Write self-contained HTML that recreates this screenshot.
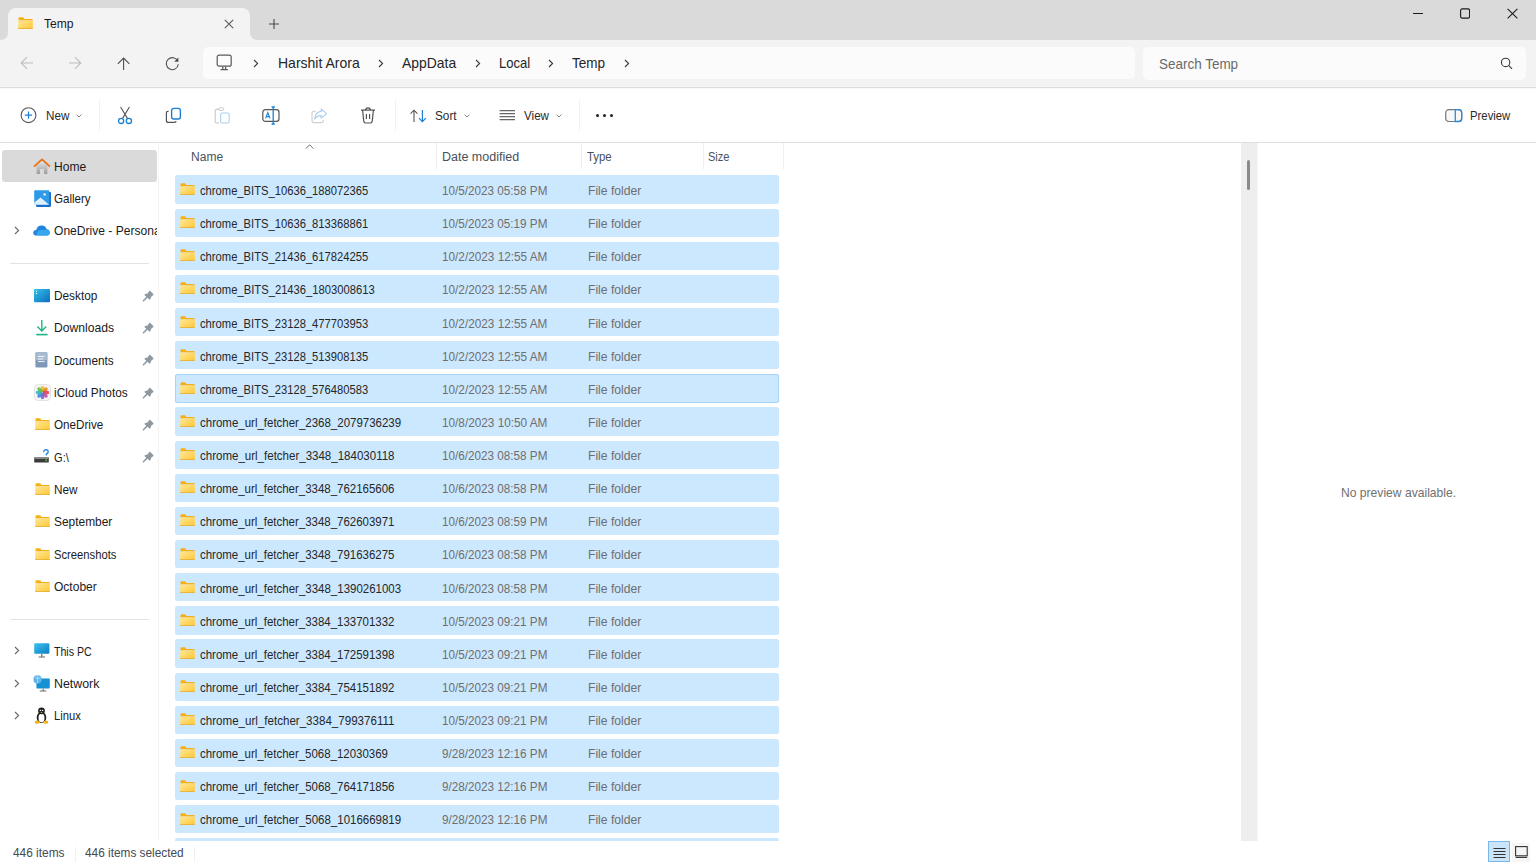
<!DOCTYPE html>
<html><head><meta charset="utf-8"><title>Temp - File Explorer</title>
<style>
html,body{margin:0;padding:0;}
body{width:1536px;height:862px;overflow:hidden;position:relative;background:#fff;font-family:"Liberation Sans",sans-serif;}
.b{position:absolute;}
.t{position:absolute;white-space:nowrap;transform-origin:0 0;}
</style></head><body>
<svg width="0" height="0" style="position:absolute"><defs><linearGradient id="fg" x1="0" y1="0" x2="1" y2="1"><stop offset="0" stop-color="#ffe799"/><stop offset="1" stop-color="#ffc832"/></linearGradient></defs></svg>
<div class="b" style="left:0px;top:0px;width:1536px;height:40px;background:#dadada;"></div><div class="b" style="left:8px;top:8px;width:242px;height:32px;background:#f3f3f3;border-radius:8px 8px 0 0;"></div><svg class="b" style="left:0px;top:32px" width="8" height="8" viewBox="0 0 8 8"><path d="M0 8 L8 8 L8 0 Q8 8 0 8Z" fill="#f3f3f3"/></svg><svg class="b" style="left:250px;top:32px" width="8" height="8" viewBox="0 0 8 8"><path d="M0 0 L0 8 L8 8 Q0 8 0 0Z" fill="#f3f3f3"/></svg><svg class="b" style="left:17.5px;top:17.3px" width="15" height="12" viewBox="0 0 15 12"><path d="M0.5 1.2 Q0.5 0.2 1.5 0.2 H5.2 L6.4 1.9 H13.6 Q14.8 1.9 14.8 3.1 V3.6 H0.5Z" fill="#f5b016"/><rect x="0.2" y="3.4" width="14.6" height="8.4" rx="0.9" fill="url(#fg)"/><rect x="0.2" y="11.0" width="14.6" height="0.8" fill="#e6ad2e"/></svg><div class="t" style="left:43.5px;top:16px;font-size:13px;line-height:15px;color:#1a1a1a;transform:scaleX(0.9309);">Temp</div><svg class="b" style="left:224px;top:19px" width="10" height="10" viewBox="0 0 10 10"><path d="M0.8 0.8 L9.2 9.2 M9.2 0.8 L0.8 9.2" stroke="#5a5a5a" stroke-width="1.1" fill="none"/></svg><svg class="b" style="left:269px;top:19px" width="10" height="10" viewBox="0 0 10 10"><path d="M5 0 V10 M0 5 H10" stroke="#4a4a4a" stroke-width="1.1" fill="none"/></svg><div class="b" style="left:1413px;top:13px;width:10px;height:1px;background:#1a1a1a;"></div><svg class="b" style="left:1460px;top:8px" width="10" height="11" viewBox="0 0 10 11"><rect x="0.6" y="0.9" width="9" height="9.2" rx="1.6" stroke="#1a1a1a" stroke-width="1.1" fill="none"/></svg><svg class="b" style="left:1507px;top:8px" width="11" height="11" viewBox="0 0 11 11"><path d="M0.6 0.9 L10.4 10.3 M10.4 0.9 L0.6 10.3" stroke="#1a1a1a" stroke-width="1.1" fill="none"/></svg><div class="b" style="left:0px;top:40px;width:1536px;height:47px;background:#f3f3f3;"></div><div class="b" style="left:0px;top:87px;width:1536px;height:1px;background:#dcdcdc;"></div><svg class="b" style="left:20px;top:56px" width="14" height="14" viewBox="0 0 14 14"><path d="M13 7 H1.5 M7 1.2 L1.2 7 L7 12.8" stroke="#bdbdbd" stroke-width="1.1" fill="none"/></svg><svg class="b" style="left:68px;top:56px" width="14" height="14" viewBox="0 0 14 14"><path d="M1 7 H12.5 M7 1.2 L12.8 7 L7 12.8" stroke="#bdbdbd" stroke-width="1.1" fill="none"/></svg><svg class="b" style="left:117px;top:57px" width="14" height="14" viewBox="0 0 14 14"><path d="M6.6 13 V1.2 M0.8 6.8 L6.6 1 L12.4 6.8" stroke="#4f4f4f" stroke-width="1.1" fill="none"/></svg><svg class="b" style="left:165px;top:56px" width="15" height="15" viewBox="0 0 15 15"><path d="M12.8 5.2 A6 6 0 1 0 13.3 8.2" stroke="#4f4f4f" stroke-width="1.1" fill="none"/><path d="M13.4 1.6 V5.8 H9.2Z" fill="#4f4f4f"/></svg><div class="b" style="left:203px;top:47px;width:932px;height:32px;background:#fbfbfb;border-radius:5px;"></div><svg class="b" style="left:216px;top:54px" width="17" height="17" viewBox="0 0 17 17"><rect x="1.2" y="1.2" width="14" height="11" rx="2" stroke="#5a5a5a" stroke-width="1.2" fill="none"/><path d="M4.5 15.6 H11.9 M6.8 12.4 V15.4 M9.6 12.4 V15.4" stroke="#5a5a5a" stroke-width="1.2"/></svg><svg class="b" style="left:253px;top:59px" width="6" height="9" viewBox="0 0 6 9"><path d="M1 1 L4.6 4.5 L1 8" stroke="#3a3a3a" stroke-width="1.1" fill="none"/></svg><svg class="b" style="left:378px;top:59px" width="6" height="9" viewBox="0 0 6 9"><path d="M1 1 L4.6 4.5 L1 8" stroke="#3a3a3a" stroke-width="1.1" fill="none"/></svg><svg class="b" style="left:474.5px;top:59px" width="6" height="9" viewBox="0 0 6 9"><path d="M1 1 L4.6 4.5 L1 8" stroke="#3a3a3a" stroke-width="1.1" fill="none"/></svg><svg class="b" style="left:548px;top:59px" width="6" height="9" viewBox="0 0 6 9"><path d="M1 1 L4.6 4.5 L1 8" stroke="#3a3a3a" stroke-width="1.1" fill="none"/></svg><svg class="b" style="left:623.5px;top:59px" width="6" height="9" viewBox="0 0 6 9"><path d="M1 1 L4.6 4.5 L1 8" stroke="#3a3a3a" stroke-width="1.1" fill="none"/></svg><div class="t" style="left:277.8px;top:55px;font-size:14.5px;line-height:16px;color:#262626;transform:scaleX(0.9654);">Harshit Arora</div><div class="t" style="left:402.1px;top:55px;font-size:14.5px;line-height:16px;color:#262626;transform:scaleX(0.9604);">AppData</div><div class="t" style="left:498.5px;top:55px;font-size:14.5px;line-height:16px;color:#262626;transform:scaleX(0.8999);">Local</div><div class="t" style="left:572.2px;top:55px;font-size:14.5px;line-height:16px;color:#262626;transform:scaleX(0.9332);">Temp</div><div class="b" style="left:1143px;top:47px;width:383px;height:33px;background:#fbfbfb;border-radius:5px;"></div><div class="t" style="left:1158.5px;top:55px;font-size:15px;line-height:17px;color:#6a6a6a;transform:scaleX(0.8977);">Search Temp</div><svg class="b" style="left:1500px;top:57px" width="13" height="13" viewBox="0 0 13 13"><circle cx="5.6" cy="5.4" r="4.2" stroke="#3a3a3a" stroke-width="1.1" fill="none"/><path d="M8.6 8.4 L12 11.8" stroke="#3a3a3a" stroke-width="1.2"/></svg><div class="b" style="left:0px;top:88px;width:1536px;height:54px;background:#ffffff;"></div><div class="b" style="left:0px;top:142px;width:1536px;height:1px;background:#e0e0e0;"></div><div class="b" style="left:0px;top:88px;width:1536px;height:1px;background:#f8f8f8;"></div><svg class="b" style="left:20px;top:107px" width="17" height="17" viewBox="0 0 17 17"><circle cx="8.5" cy="8.2" r="7.4" stroke="#555" stroke-width="1.1" fill="none"/><path d="M8.5 4.6 V11.8 M4.9 8.2 H12.1" stroke="#1a7fd4" stroke-width="1.2"/></svg><div class="t" style="left:45.6px;top:108px;font-size:13px;line-height:15px;color:#2b2b2b;transform:scaleX(0.8995);">New</div><svg class="b" style="left:76px;top:114px" width="6" height="4" viewBox="0 0 6 4"><path d="M0.6 0.6 L3 3 L5.4 0.6" stroke="#777" stroke-width="0.9" fill="none"/></svg><div class="b" style="left:99px;top:100px;width:1px;height:31px;background:#f0f0f0;"></div><svg class="b" style="left:117px;top:106px" width="16" height="19" viewBox="0 0 16 19"><path d="M3.6 1 L10.6 12.6 M12.4 1 L5.4 12.6" stroke="#555" stroke-width="1.1" fill="none"/><circle cx="4.1" cy="14.9" r="2.6" stroke="#1a7fd4" stroke-width="1.3" fill="none"/><circle cx="11.9" cy="14.9" r="2.6" stroke="#1a7fd4" stroke-width="1.3" fill="none"/></svg><svg class="b" style="left:165px;top:107px" width="17" height="17" viewBox="0 0 17 17"><path d="M3.6 4.4 H2.8 Q1.4 4.4 1.4 5.8 V13.4 Q1.4 15.4 3.4 15.4 H9.6 Q11 15.4 11 14" stroke="#555" stroke-width="1.2" fill="none"/><rect x="6.6" y="1.4" width="8.8" height="10.6" rx="2.2" stroke="#1a7fd4" stroke-width="1.4" fill="none"/></svg><svg class="b" style="left:214px;top:107px" width="17" height="17" viewBox="0 0 17 17"><path d="M5 2.4 H2.6 Q1.2 2.4 1.2 3.8 V14.6 Q1.2 16 2.6 16 H5" stroke="#c8c8c8" stroke-width="1.1" fill="none"/><rect x="4.8" y="0.8" width="5" height="2.6" rx="1.2" stroke="#c8c8c8" stroke-width="1" fill="none"/><rect x="6.6" y="6" width="8.6" height="10" rx="1.8" stroke="#a9cff0" stroke-width="1.1" fill="none"/></svg><svg class="b" style="left:262px;top:106px" width="18" height="19" viewBox="0 0 18 19"><rect x="0.8" y="3.6" width="16.2" height="11.8" rx="2.6" stroke="#555" stroke-width="1.2" fill="none"/><path d="M3.6 12.4 L5.8 6.6 L8 12.4 M4.4 10.6 H7.2" stroke="#1a7fd4" stroke-width="1.1" fill="none"/><path d="M11.2 1 V18 M9.6 1 H12.8 M9.6 18 H12.8" stroke="#1a7fd4" stroke-width="1.3"/></svg><svg class="b" style="left:311px;top:108px" width="17" height="16" viewBox="0 0 17 16"><path d="M5 3.2 H3 Q1 3.2 1 5.2 V12.6 Q1 14.6 3 14.6 H10.4 Q12.4 14.6 12.4 12.6 V12" stroke="#cfcfcf" stroke-width="1.1" fill="none"/><path d="M10.2 1 L15.6 5.6 L10.2 10.2 V7.6 Q6 7.4 3.6 11 Q4.4 3.8 10.2 3.4Z" stroke="#a9cff0" stroke-width="1.1" fill="none" stroke-linejoin="round"/></svg><svg class="b" style="left:360px;top:107px" width="16" height="17" viewBox="0 0 16 17"><path d="M1 3.2 H15 M5.6 3 Q5.6 0.9 8 0.9 Q10.4 0.9 10.4 3 M2.6 3.4 L3.8 14.4 Q4 16 5.6 16 H10.4 Q12 16 12.2 14.4 L13.4 3.4 M6.4 7 V12 M9.6 7 V12" stroke="#555" stroke-width="1.2" fill="none"/></svg><div class="b" style="left:394.8px;top:100px;width:1px;height:31px;background:#f0f0f0;"></div><svg class="b" style="left:410px;top:109px" width="17" height="14" viewBox="0 0 17 14"><path d="M4 13 V1.2 M0.6 4.6 L4 1.2 L7.4 4.6" stroke="#555" stroke-width="1.1" fill="none"/><path d="M12.4 1 V12.6 M9 9.2 L12.4 12.6 L15.8 9.2" stroke="#1a7fd4" stroke-width="1.2" fill="none"/></svg><div class="t" style="left:435px;top:108px;font-size:13px;line-height:15px;color:#2b2b2b;transform:scaleX(0.9059);">Sort</div><svg class="b" style="left:464px;top:114px" width="6" height="4" viewBox="0 0 6 4"><path d="M0.6 0.6 L3 3 L5.4 0.6" stroke="#777" stroke-width="0.9" fill="none"/></svg><svg class="b" style="left:499px;top:109px" width="17" height="13" viewBox="0 0 17 13"><path d="M0.6 1.6 H16 M0.6 4.6 H16 M0.6 7.6 H16 M0.6 10.6 H16" stroke="#666" stroke-width="1.1"/></svg><div class="t" style="left:524px;top:108px;font-size:13px;line-height:15px;color:#2b2b2b;transform:scaleX(0.8944);">View</div><svg class="b" style="left:556px;top:114px" width="6" height="4" viewBox="0 0 6 4"><path d="M0.6 0.6 L3 3 L5.4 0.6" stroke="#777" stroke-width="0.9" fill="none"/></svg><div class="b" style="left:579.3px;top:100px;width:1px;height:31px;background:#f0f0f0;"></div><div class="b" style="left:596.3px;top:114.2px;width:3px;height:3px;background:#1f1f1f;border-radius:50%;"></div><div class="b" style="left:603.3px;top:114.2px;width:3px;height:3px;background:#1f1f1f;border-radius:50%;"></div><div class="b" style="left:610.3px;top:114.2px;width:3px;height:3px;background:#1f1f1f;border-radius:50%;"></div><svg class="b" style="left:1445px;top:109px" width="18" height="14" viewBox="0 0 18 14"><rect x="0.7" y="0.7" width="16" height="11.8" rx="3" stroke="#777" stroke-width="1.2" fill="#f8f8f8"/><path d="M10.3 0.7 H13.7 Q16.7 0.7 16.7 3.7 V9.5 Q16.7 12.5 13.7 12.5 H10.3Z" stroke="#2b8ae0" stroke-width="1.3" fill="none"/></svg><div class="t" style="left:1470.4px;top:109px;font-size:12.7px;line-height:14px;color:#2b2b2b;transform:scaleX(0.8931);">Preview</div><div class="b" style="left:0px;top:143px;width:158px;height:698px;background:#ffffff;"></div><div class="b" style="left:158px;top:143px;width:1.5px;height:698px;background:#f4f4f4;"></div><div class="b" style="left:2px;top:149.6px;width:155px;height:32.2px;background:#dadada;border-radius:3px;"></div><div class="b" style="left:10px;top:263px;width:139px;height:1px;background:#e3e3e3;"></div><div class="b" style="left:10px;top:618.5px;width:139px;height:1px;background:#e3e3e3;"></div><div class="b" style="left:0;top:0;width:157px;height:841px;overflow:hidden"><div class="t" style="left:53.9px;top:159px;font-size:13px;line-height:15px;color:#1b1b1b;transform:scaleX(0.9283);">Home</div><svg class="b" style="left:33px;top:157.7px" width="18" height="17" viewBox="0 0 18 17"><defs><linearGradient id="hg" x1="0" y1="0" x2="0" y2="1"><stop offset="0" stop-color="#e6e6e6"/><stop offset="1" stop-color="#9c9c9c"/></linearGradient></defs><path d="M3.6 7.6 L9 2.8 L14.4 7.6 V16 H11 V11 H7 V16 H3.6Z" fill="url(#hg)"/><path d="M1 8.6 L9 1.4 L17 8.6" stroke="#e8701a" stroke-width="1.8" fill="none" stroke-linejoin="round"/></svg><div class="t" style="left:53.9px;top:191px;font-size:13px;line-height:15px;color:#1b1b1b;transform:scaleX(0.8886);">Gallery</div><svg class="b" style="left:34px;top:189.7px" width="17" height="17" viewBox="0 0 17 17"><rect x="2" y="2" width="15" height="15" rx="1" fill="#1d6fc9"/><rect x="0.2" y="0.2" width="15" height="14.6" rx="1" fill="#2f9ae8"/><path d="M0.2 12.6 L6.6 7.4 L14.2 14 L15.2 14.8 H0.2Z" fill="#dff0fd"/><circle cx="10.6" cy="4.4" r="1.2" fill="#fff"/></svg><div class="t" style="left:53.9px;top:223px;font-size:13px;line-height:15px;color:#1b1b1b;transform:scaleX(0.928);">OneDrive - Personal</div><svg class="b" style="left:33px;top:224.7px" width="17" height="11" viewBox="0 0 17 11"><path d="M3.6 10.6 Q0.2 10.6 0.2 7.8 Q0.2 5.2 3.2 5 Q4.4 0.4 9 0.6 Q12.6 0.8 13.6 4.2 Q16.8 4.4 16.8 7.6 Q16.8 10.6 13.8 10.6Z" fill="#1f85dd"/><path d="M5 10.6 Q3 10 4.4 6.8 Q6.6 4 10.4 5 Q13.4 3.6 16 5.4 Q16.8 6.4 16.8 7.6 Q16.8 10.6 13.8 10.6Z" fill="#36a6ee"/></svg><svg class="b" style="left:14px;top:225.89999999999998px" width="6" height="9" viewBox="0 0 6 9"><path d="M1 1 L4.6 4.5 L1 8" stroke="#666" stroke-width="1.1" fill="none"/></svg><div class="t" style="left:53.9px;top:288px;font-size:13px;line-height:15px;color:#1b1b1b;transform:scaleX(0.9098);">Desktop</div><svg class="b" style="left:34px;top:288.59999999999997px" width="16" height="14" viewBox="0 0 16 14"><defs><linearGradient id="dg" x1="0" y1="0" x2="1" y2="1"><stop offset="0" stop-color="#30c3e8"/><stop offset="1" stop-color="#0f6bc0"/></linearGradient></defs><rect x="0" y="0" width="16" height="13.2" rx="1" fill="url(#dg)"/><rect x="2" y="1.6" width="1.1" height="1.1" fill="#fff"/><rect x="2" y="3.9" width="1.1" height="1.1" fill="#fff"/></svg><svg class="b" style="left:142px;top:289.59999999999997px" width="12" height="12" viewBox="0 0 12 12"><path d="M1.4 10.8 L4.8 7.4" stroke="#8e99a2" stroke-width="1.5" stroke-linecap="round"/><path d="M7.3 0.7 Q7.8 0.5 8.3 1 L11.3 4 Q11.8 4.5 11.4 5 L9.4 6.4 L8.6 8.6 Q8.4 9.6 7.6 9.8 L2.4 5 Q2.6 4.2 3.6 4 L5.8 3.2 Z" fill="#8e99a2"/></svg><div class="t" style="left:53.9px;top:320px;font-size:13px;line-height:15px;color:#1b1b1b;transform:scaleX(0.9343);">Downloads</div><svg class="b" style="left:35px;top:319.42999999999995px" width="14" height="17" viewBox="0 0 14 17"><path d="M6.8 1 V12 M2.4 7.6 L6.8 12 L11.2 7.6" stroke="#1fb38a" stroke-width="1.4" fill="none"/><path d="M1.2 15.6 H12.6" stroke="#1fb38a" stroke-width="1.6"/></svg><svg class="b" style="left:142px;top:321.92999999999995px" width="12" height="12" viewBox="0 0 12 12"><path d="M1.4 10.8 L4.8 7.4" stroke="#8e99a2" stroke-width="1.5" stroke-linecap="round"/><path d="M7.3 0.7 Q7.8 0.5 8.3 1 L11.3 4 Q11.8 4.5 11.4 5 L9.4 6.4 L8.6 8.6 Q8.4 9.6 7.6 9.8 L2.4 5 Q2.6 4.2 3.6 4 L5.8 3.2 Z" fill="#8e99a2"/></svg><div class="t" style="left:53.9px;top:353px;font-size:13px;line-height:15px;color:#1b1b1b;transform:scaleX(0.9080);">Documents</div><svg class="b" style="left:35px;top:351.9599999999999px" width="13" height="16" viewBox="0 0 13 16"><rect x="0.4" y="0.2" width="12" height="15.4" rx="1.4" fill="#7d98b8"/><rect x="0.4" y="0.2" width="12" height="8" rx="1.4" fill="#a6bad0"/><path d="M3 4.4 H9.6 M3 7 H8 M3 9.6 H9.6" stroke="#f1f5f9" stroke-width="1"/></svg><svg class="b" style="left:142px;top:354.25999999999993px" width="12" height="12" viewBox="0 0 12 12"><path d="M1.4 10.8 L4.8 7.4" stroke="#8e99a2" stroke-width="1.5" stroke-linecap="round"/><path d="M7.3 0.7 Q7.8 0.5 8.3 1 L11.3 4 Q11.8 4.5 11.4 5 L9.4 6.4 L8.6 8.6 Q8.4 9.6 7.6 9.8 L2.4 5 Q2.6 4.2 3.6 4 L5.8 3.2 Z" fill="#8e99a2"/></svg><div class="t" style="left:53.9px;top:385px;font-size:13px;line-height:15px;color:#1b1b1b;transform:scaleX(0.9104);">iCloud Photos</div><svg class="b" style="left:34px;top:383.59px" width="17" height="17" viewBox="0 0 17 17"><rect x="0.5" y="0.5" width="16" height="16" rx="3.6" fill="#f6f6f6" stroke="#ddd" stroke-width="0.8"/><ellipse cx="8.5" cy="5" rx="1.9" ry="3.2" fill="#f4c12a" opacity="0.9" transform="rotate(0 8.5 8.5)"/><ellipse cx="8.5" cy="5" rx="1.9" ry="3.2" fill="#ef8a1d" opacity="0.9" transform="rotate(45 8.5 8.5)"/><ellipse cx="8.5" cy="5" rx="1.9" ry="3.2" fill="#e5434f" opacity="0.9" transform="rotate(90 8.5 8.5)"/><ellipse cx="8.5" cy="5" rx="1.9" ry="3.2" fill="#c84d9e" opacity="0.9" transform="rotate(135 8.5 8.5)"/><ellipse cx="8.5" cy="5" rx="1.9" ry="3.2" fill="#8460c9" opacity="0.9" transform="rotate(180 8.5 8.5)"/><ellipse cx="8.5" cy="5" rx="1.9" ry="3.2" fill="#3f86e0" opacity="0.9" transform="rotate(225 8.5 8.5)"/><ellipse cx="8.5" cy="5" rx="1.9" ry="3.2" fill="#37b4c8" opacity="0.9" transform="rotate(270 8.5 8.5)"/><ellipse cx="8.5" cy="5" rx="1.9" ry="3.2" fill="#62bd4a" opacity="0.9" transform="rotate(315 8.5 8.5)"/></svg><svg class="b" style="left:142px;top:386.59px" width="12" height="12" viewBox="0 0 12 12"><path d="M1.4 10.8 L4.8 7.4" stroke="#8e99a2" stroke-width="1.5" stroke-linecap="round"/><path d="M7.3 0.7 Q7.8 0.5 8.3 1 L11.3 4 Q11.8 4.5 11.4 5 L9.4 6.4 L8.6 8.6 Q8.4 9.6 7.6 9.8 L2.4 5 Q2.6 4.2 3.6 4 L5.8 3.2 Z" fill="#8e99a2"/></svg><div class="t" style="left:53.9px;top:417px;font-size:13px;line-height:15px;color:#1b1b1b;transform:scaleX(0.8976);">OneDrive</div><svg class="b" style="left:34.5px;top:418.41999999999996px" width="15" height="12" viewBox="0 0 15 12"><path d="M0.5 1.2 Q0.5 0.2 1.5 0.2 H5.2 L6.4 1.9 H13.6 Q14.8 1.9 14.8 3.1 V3.6 H0.5Z" fill="#f5b016"/><rect x="0.2" y="3.4" width="14.6" height="8.4" rx="0.9" fill="url(#fg)"/><rect x="0.2" y="11.0" width="14.6" height="0.8" fill="#e6ad2e"/></svg><svg class="b" style="left:142px;top:418.91999999999996px" width="12" height="12" viewBox="0 0 12 12"><path d="M1.4 10.8 L4.8 7.4" stroke="#8e99a2" stroke-width="1.5" stroke-linecap="round"/><path d="M7.3 0.7 Q7.8 0.5 8.3 1 L11.3 4 Q11.8 4.5 11.4 5 L9.4 6.4 L8.6 8.6 Q8.4 9.6 7.6 9.8 L2.4 5 Q2.6 4.2 3.6 4 L5.8 3.2 Z" fill="#8e99a2"/></svg><div class="t" style="left:53.9px;top:450px;font-size:13px;line-height:15px;color:#1b1b1b;transform:scaleX(0.8533);">G:\</div><svg class="b" style="left:34px;top:448.74999999999994px" width="15" height="16" viewBox="0 0 15 16"><rect x="0.2" y="8" width="14.6" height="5.6" rx="1.2" fill="#3b3b3b"/><rect x="0.2" y="8" width="14.6" height="2" rx="0.8" fill="#8a8a8a"/><circle cx="12.2" cy="11.4" r="0.8" fill="#59d05c"/><path d="M9.8 3.2 Q9.8 0.8 12 0.8 Q14.2 0.8 14.2 2.8 Q14.2 4.2 12.4 5 V6.4" stroke="#2b8ae0" stroke-width="1.4" fill="none"/></svg><svg class="b" style="left:142px;top:451.24999999999994px" width="12" height="12" viewBox="0 0 12 12"><path d="M1.4 10.8 L4.8 7.4" stroke="#8e99a2" stroke-width="1.5" stroke-linecap="round"/><path d="M7.3 0.7 Q7.8 0.5 8.3 1 L11.3 4 Q11.8 4.5 11.4 5 L9.4 6.4 L8.6 8.6 Q8.4 9.6 7.6 9.8 L2.4 5 Q2.6 4.2 3.6 4 L5.8 3.2 Z" fill="#8e99a2"/></svg><div class="t" style="left:53.9px;top:482px;font-size:13px;line-height:15px;color:#1b1b1b;transform:scaleX(0.9033);">New</div><svg class="b" style="left:34.5px;top:483.08px" width="15" height="12" viewBox="0 0 15 12"><path d="M0.5 1.2 Q0.5 0.2 1.5 0.2 H5.2 L6.4 1.9 H13.6 Q14.8 1.9 14.8 3.1 V3.6 H0.5Z" fill="#f5b016"/><rect x="0.2" y="3.4" width="14.6" height="8.4" rx="0.9" fill="url(#fg)"/><rect x="0.2" y="11.0" width="14.6" height="0.8" fill="#e6ad2e"/></svg><div class="t" style="left:53.9px;top:514px;font-size:13px;line-height:15px;color:#1b1b1b;transform:scaleX(0.9168);">September</div><svg class="b" style="left:34.5px;top:515.4100000000001px" width="15" height="12" viewBox="0 0 15 12"><path d="M0.5 1.2 Q0.5 0.2 1.5 0.2 H5.2 L6.4 1.9 H13.6 Q14.8 1.9 14.8 3.1 V3.6 H0.5Z" fill="#f5b016"/><rect x="0.2" y="3.4" width="14.6" height="8.4" rx="0.9" fill="url(#fg)"/><rect x="0.2" y="11.0" width="14.6" height="0.8" fill="#e6ad2e"/></svg><div class="t" style="left:53.9px;top:547px;font-size:13px;line-height:15px;color:#1b1b1b;transform:scaleX(0.8635);">Screenshots</div><svg class="b" style="left:34.5px;top:547.74px" width="15" height="12" viewBox="0 0 15 12"><path d="M0.5 1.2 Q0.5 0.2 1.5 0.2 H5.2 L6.4 1.9 H13.6 Q14.8 1.9 14.8 3.1 V3.6 H0.5Z" fill="#f5b016"/><rect x="0.2" y="3.4" width="14.6" height="8.4" rx="0.9" fill="url(#fg)"/><rect x="0.2" y="11.0" width="14.6" height="0.8" fill="#e6ad2e"/></svg><div class="t" style="left:53.9px;top:579px;font-size:13px;line-height:15px;color:#1b1b1b;transform:scaleX(0.9254);">October</div><svg class="b" style="left:34.5px;top:580.0699999999999px" width="15" height="12" viewBox="0 0 15 12"><path d="M0.5 1.2 Q0.5 0.2 1.5 0.2 H5.2 L6.4 1.9 H13.6 Q14.8 1.9 14.8 3.1 V3.6 H0.5Z" fill="#f5b016"/><rect x="0.2" y="3.4" width="14.6" height="8.4" rx="0.9" fill="url(#fg)"/><rect x="0.2" y="11.0" width="14.6" height="0.8" fill="#e6ad2e"/></svg><div class="t" style="left:53.9px;top:644px;font-size:13px;line-height:15px;color:#1b1b1b;transform:scaleX(0.8154);">This PC</div><svg class="b" style="left:34px;top:642.7px" width="16" height="15" viewBox="0 0 16 15"><defs><linearGradient id="pcg" x1="0" y1="0" x2="1" y2="1"><stop offset="0" stop-color="#36c5ef"/><stop offset="1" stop-color="#0f7cc4"/></linearGradient></defs><rect x="0.2" y="0.2" width="15.2" height="10.6" rx="1" fill="url(#pcg)"/><path d="M7.8 11 V13.6 M4.6 14 H11" stroke="#6b6b6b" stroke-width="1.2"/></svg><svg class="b" style="left:14px;top:646.4000000000001px" width="6" height="9" viewBox="0 0 6 9"><path d="M1 1 L4.6 4.5 L1 8" stroke="#666" stroke-width="1.1" fill="none"/></svg><div class="t" style="left:53.9px;top:676px;font-size:13px;line-height:15px;color:#1b1b1b;transform:scaleX(0.9520);">Network</div><svg class="b" style="left:33px;top:674.5300000000001px" width="18" height="17" viewBox="0 0 18 17"><rect x="3.4" y="3.6" width="13.4" height="9.8" rx="1" fill="#1592d4"/><path d="M10.2 13.8 V15.6 M6.8 16 H13.4" stroke="#6b6b6b" stroke-width="1.1"/><circle cx="4.6" cy="4.4" r="4.1" fill="#5fb3ea"/><path d="M2 2.6 Q4.6 4.4 7.6 2.6 M4.6 0.4 V8.4" stroke="#c9e8fb" stroke-width="0.7" fill="none"/></svg><svg class="b" style="left:14px;top:678.7300000000001px" width="6" height="9" viewBox="0 0 6 9"><path d="M1 1 L4.6 4.5 L1 8" stroke="#666" stroke-width="1.1" fill="none"/></svg><div class="t" style="left:53.9px;top:708px;font-size:13px;line-height:15px;color:#1b1b1b;transform:scaleX(0.8656);">Linux</div><svg class="b" style="left:34px;top:706.86px" width="15" height="17" viewBox="0 0 15 17"><ellipse cx="7.5" cy="10.4" rx="4.8" ry="5.6" fill="#222"/><ellipse cx="7.5" cy="11" rx="3" ry="4.2" fill="#fff"/><circle cx="7.5" cy="3.8" r="3.4" fill="#222"/><circle cx="6.4" cy="3.4" r="0.7" fill="#fff"/><circle cx="8.6" cy="3.4" r="0.7" fill="#fff"/><path d="M6.2 5 L7.5 6 L8.8 5Z" fill="#f0b31a"/><ellipse cx="3.2" cy="15.2" rx="2.6" ry="1.6" fill="#f0b31a"/><ellipse cx="11.8" cy="15.2" rx="2.6" ry="1.6" fill="#f0b31a"/></svg><svg class="b" style="left:14px;top:711.0600000000001px" width="6" height="9" viewBox="0 0 6 9"><path d="M1 1 L4.6 4.5 L1 8" stroke="#666" stroke-width="1.1" fill="none"/></svg></div><div class="b" style="left:159px;top:143px;width:1082px;height:698px;background:#ffffff;"></div><div class="t" style="left:190.8px;top:150px;font-size:12.5px;line-height:14px;color:#48505a;transform:scaleX(0.9627);">Name</div><svg class="b" style="left:305px;top:143.5px" width="10" height="6" viewBox="0 0 10 6"><path d="M0.8 4.6 L4.6 0.8 L8.4 4.6" stroke="#6a6a6a" stroke-width="1" fill="none"/></svg><div class="b" style="left:435.5px;top:143px;width:1px;height:26px;background:#efefef;"></div><div class="b" style="left:580.5px;top:143px;width:1px;height:26px;background:#efefef;"></div><div class="b" style="left:702.5px;top:143px;width:1px;height:26px;background:#efefef;"></div><div class="b" style="left:782.5px;top:143px;width:1px;height:26px;background:#efefef;"></div><div class="t" style="left:442px;top:150px;font-size:12.5px;line-height:14px;color:#48505a;transform:scaleX(0.9997);">Date modified</div><div class="t" style="left:587.2px;top:150px;font-size:12.5px;line-height:14px;color:#48505a;transform:scaleX(0.9111);">Type</div><div class="t" style="left:708.2px;top:150px;font-size:12.5px;line-height:14px;color:#48505a;transform:scaleX(0.8838);">Size</div><div class="b" style="left:159px;top:143px;width:1082px;height:698px;overflow:hidden"><div class="b" style="left:16.19999999999999px;top:32.4px;width:604.0px;height:28.3px;background:#cce8ff;border-radius:2.5px;"></div><svg class="b" style="left:21px;top:40.0px" width="15" height="12" viewBox="0 0 15 12"><path d="M0.5 1.2 Q0.5 0.2 1.5 0.2 H5.2 L6.4 1.9 H13.6 Q14.8 1.9 14.8 3.1 V3.6 H0.5Z" fill="#f5b016"/><rect x="0.2" y="3.4" width="14.6" height="8.4" rx="0.9" fill="url(#fg)"/><rect x="0.2" y="11.0" width="14.6" height="0.8" fill="#e6ad2e"/></svg><div class="t" style="left:40.69999999999999px;top:40px;font-size:12.8px;line-height:15px;color:#262626;transform:scaleX(0.8755);">chrome_BITS_10636_188072365</div><div class="t" style="left:283px;top:41px;font-size:12.3px;line-height:14px;color:#6e6e6e;transform:scaleX(0.9516);">10/5/2023 05:58 PM</div><div class="t" style="left:428.5px;top:41px;font-size:12.3px;line-height:14px;color:#6e6e6e;transform:scaleX(0.9870);">File folder</div><div class="b" style="left:16.19999999999999px;top:65.54px;width:604.0px;height:28.3px;background:#cce8ff;border-radius:2.5px;"></div><svg class="b" style="left:21px;top:73.14px" width="15" height="12" viewBox="0 0 15 12"><path d="M0.5 1.2 Q0.5 0.2 1.5 0.2 H5.2 L6.4 1.9 H13.6 Q14.8 1.9 14.8 3.1 V3.6 H0.5Z" fill="#f5b016"/><rect x="0.2" y="3.4" width="14.6" height="8.4" rx="0.9" fill="url(#fg)"/><rect x="0.2" y="11.0" width="14.6" height="0.8" fill="#e6ad2e"/></svg><div class="t" style="left:40.69999999999999px;top:73px;font-size:12.8px;line-height:15px;color:#262626;transform:scaleX(0.8755);">chrome_BITS_10636_813368861</div><div class="t" style="left:283px;top:74px;font-size:12.3px;line-height:14px;color:#6e6e6e;transform:scaleX(0.9516);">10/5/2023 05:19 PM</div><div class="t" style="left:428.5px;top:74px;font-size:12.3px;line-height:14px;color:#6e6e6e;transform:scaleX(0.9870);">File folder</div><div class="b" style="left:16.19999999999999px;top:98.68px;width:604.0px;height:28.3px;background:#cce8ff;border-radius:2.5px;"></div><svg class="b" style="left:21px;top:106.28px" width="15" height="12" viewBox="0 0 15 12"><path d="M0.5 1.2 Q0.5 0.2 1.5 0.2 H5.2 L6.4 1.9 H13.6 Q14.8 1.9 14.8 3.1 V3.6 H0.5Z" fill="#f5b016"/><rect x="0.2" y="3.4" width="14.6" height="8.4" rx="0.9" fill="url(#fg)"/><rect x="0.2" y="11.0" width="14.6" height="0.8" fill="#e6ad2e"/></svg><div class="t" style="left:40.69999999999999px;top:106px;font-size:12.8px;line-height:15px;color:#262626;transform:scaleX(0.8755);">chrome_BITS_21436_617824255</div><div class="t" style="left:283px;top:107px;font-size:12.3px;line-height:14px;color:#6e6e6e;transform:scaleX(0.9575);">10/2/2023 12:55 AM</div><div class="t" style="left:428.5px;top:107px;font-size:12.3px;line-height:14px;color:#6e6e6e;transform:scaleX(0.9870);">File folder</div><div class="b" style="left:16.19999999999999px;top:131.82px;width:604.0px;height:28.3px;background:#cce8ff;border-radius:2.5px;"></div><svg class="b" style="left:21px;top:139.42px" width="15" height="12" viewBox="0 0 15 12"><path d="M0.5 1.2 Q0.5 0.2 1.5 0.2 H5.2 L6.4 1.9 H13.6 Q14.8 1.9 14.8 3.1 V3.6 H0.5Z" fill="#f5b016"/><rect x="0.2" y="3.4" width="14.6" height="8.4" rx="0.9" fill="url(#fg)"/><rect x="0.2" y="11.0" width="14.6" height="0.8" fill="#e6ad2e"/></svg><div class="t" style="left:40.69999999999999px;top:139px;font-size:12.8px;line-height:15px;color:#262626;transform:scaleX(0.8774);">chrome_BITS_21436_1803008613</div><div class="t" style="left:283px;top:140px;font-size:12.3px;line-height:14px;color:#6e6e6e;transform:scaleX(0.9575);">10/2/2023 12:55 AM</div><div class="t" style="left:428.5px;top:140px;font-size:12.3px;line-height:14px;color:#6e6e6e;transform:scaleX(0.9870);">File folder</div><div class="b" style="left:16.19999999999999px;top:164.96px;width:604.0px;height:28.3px;background:#cce8ff;border-radius:2.5px;"></div><svg class="b" style="left:21px;top:172.56px" width="15" height="12" viewBox="0 0 15 12"><path d="M0.5 1.2 Q0.5 0.2 1.5 0.2 H5.2 L6.4 1.9 H13.6 Q14.8 1.9 14.8 3.1 V3.6 H0.5Z" fill="#f5b016"/><rect x="0.2" y="3.4" width="14.6" height="8.4" rx="0.9" fill="url(#fg)"/><rect x="0.2" y="11.0" width="14.6" height="0.8" fill="#e6ad2e"/></svg><div class="t" style="left:40.69999999999999px;top:173px;font-size:12.8px;line-height:15px;color:#262626;transform:scaleX(0.8755);">chrome_BITS_23128_477703953</div><div class="t" style="left:283px;top:174px;font-size:12.3px;line-height:14px;color:#6e6e6e;transform:scaleX(0.9575);">10/2/2023 12:55 AM</div><div class="t" style="left:428.5px;top:174px;font-size:12.3px;line-height:14px;color:#6e6e6e;transform:scaleX(0.9870);">File folder</div><div class="b" style="left:16.19999999999999px;top:198.1px;width:604.0px;height:28.3px;background:#cce8ff;border-radius:2.5px;"></div><svg class="b" style="left:21px;top:205.7px" width="15" height="12" viewBox="0 0 15 12"><path d="M0.5 1.2 Q0.5 0.2 1.5 0.2 H5.2 L6.4 1.9 H13.6 Q14.8 1.9 14.8 3.1 V3.6 H0.5Z" fill="#f5b016"/><rect x="0.2" y="3.4" width="14.6" height="8.4" rx="0.9" fill="url(#fg)"/><rect x="0.2" y="11.0" width="14.6" height="0.8" fill="#e6ad2e"/></svg><div class="t" style="left:40.69999999999999px;top:206px;font-size:12.8px;line-height:15px;color:#262626;transform:scaleX(0.8755);">chrome_BITS_23128_513908135</div><div class="t" style="left:283px;top:207px;font-size:12.3px;line-height:14px;color:#6e6e6e;transform:scaleX(0.9575);">10/2/2023 12:55 AM</div><div class="t" style="left:428.5px;top:207px;font-size:12.3px;line-height:14px;color:#6e6e6e;transform:scaleX(0.9870);">File folder</div><div class="b" style="left:16.19999999999999px;top:231.24px;width:604.0px;height:28.3px;background:#cce8ff;border-radius:2.5px;box-shadow:inset 0 0 0 1px #a6d3f8;"></div><svg class="b" style="left:21px;top:238.84px" width="15" height="12" viewBox="0 0 15 12"><path d="M0.5 1.2 Q0.5 0.2 1.5 0.2 H5.2 L6.4 1.9 H13.6 Q14.8 1.9 14.8 3.1 V3.6 H0.5Z" fill="#f5b016"/><rect x="0.2" y="3.4" width="14.6" height="8.4" rx="0.9" fill="url(#fg)"/><rect x="0.2" y="11.0" width="14.6" height="0.8" fill="#e6ad2e"/></svg><div class="t" style="left:40.69999999999999px;top:239px;font-size:12.8px;line-height:15px;color:#262626;transform:scaleX(0.8755);">chrome_BITS_23128_576480583</div><div class="t" style="left:283px;top:240px;font-size:12.3px;line-height:14px;color:#6e6e6e;transform:scaleX(0.9575);">10/2/2023 12:55 AM</div><div class="t" style="left:428.5px;top:240px;font-size:12.3px;line-height:14px;color:#6e6e6e;transform:scaleX(0.9870);">File folder</div><div class="b" style="left:16.19999999999999px;top:264.38px;width:604.0px;height:28.3px;background:#cce8ff;border-radius:2.5px;"></div><svg class="b" style="left:21px;top:271.98px" width="15" height="12" viewBox="0 0 15 12"><path d="M0.5 1.2 Q0.5 0.2 1.5 0.2 H5.2 L6.4 1.9 H13.6 Q14.8 1.9 14.8 3.1 V3.6 H0.5Z" fill="#f5b016"/><rect x="0.2" y="3.4" width="14.6" height="8.4" rx="0.9" fill="url(#fg)"/><rect x="0.2" y="11.0" width="14.6" height="0.8" fill="#e6ad2e"/></svg><div class="t" style="left:40.69999999999999px;top:272px;font-size:12.8px;line-height:15px;color:#262626;transform:scaleX(0.8973);">chrome_url_fetcher_2368_2079736239</div><div class="t" style="left:283px;top:273px;font-size:12.3px;line-height:14px;color:#6e6e6e;transform:scaleX(0.9575);">10/8/2023 10:50 AM</div><div class="t" style="left:428.5px;top:273px;font-size:12.3px;line-height:14px;color:#6e6e6e;transform:scaleX(0.9870);">File folder</div><div class="b" style="left:16.19999999999999px;top:297.52px;width:604.0px;height:28.3px;background:#cce8ff;border-radius:2.5px;"></div><svg class="b" style="left:21px;top:305.12px" width="15" height="12" viewBox="0 0 15 12"><path d="M0.5 1.2 Q0.5 0.2 1.5 0.2 H5.2 L6.4 1.9 H13.6 Q14.8 1.9 14.8 3.1 V3.6 H0.5Z" fill="#f5b016"/><rect x="0.2" y="3.4" width="14.6" height="8.4" rx="0.9" fill="url(#fg)"/><rect x="0.2" y="11.0" width="14.6" height="0.8" fill="#e6ad2e"/></svg><div class="t" style="left:40.69999999999999px;top:305px;font-size:12.8px;line-height:15px;color:#262626;transform:scaleX(0.9002);">chrome_url_fetcher_3348_184030118</div><div class="t" style="left:283px;top:306px;font-size:12.3px;line-height:14px;color:#6e6e6e;transform:scaleX(0.9516);">10/6/2023 08:58 PM</div><div class="t" style="left:428.5px;top:306px;font-size:12.3px;line-height:14px;color:#6e6e6e;transform:scaleX(0.9870);">File folder</div><div class="b" style="left:16.19999999999999px;top:330.66px;width:604.0px;height:28.3px;background:#cce8ff;border-radius:2.5px;"></div><svg class="b" style="left:21px;top:338.26px" width="15" height="12" viewBox="0 0 15 12"><path d="M0.5 1.2 Q0.5 0.2 1.5 0.2 H5.2 L6.4 1.9 H13.6 Q14.8 1.9 14.8 3.1 V3.6 H0.5Z" fill="#f5b016"/><rect x="0.2" y="3.4" width="14.6" height="8.4" rx="0.9" fill="url(#fg)"/><rect x="0.2" y="11.0" width="14.6" height="0.8" fill="#e6ad2e"/></svg><div class="t" style="left:40.69999999999999px;top:338px;font-size:12.8px;line-height:15px;color:#262626;transform:scaleX(0.8962);">chrome_url_fetcher_3348_762165606</div><div class="t" style="left:283px;top:339px;font-size:12.3px;line-height:14px;color:#6e6e6e;transform:scaleX(0.9516);">10/6/2023 08:58 PM</div><div class="t" style="left:428.5px;top:339px;font-size:12.3px;line-height:14px;color:#6e6e6e;transform:scaleX(0.9870);">File folder</div><div class="b" style="left:16.19999999999999px;top:363.8px;width:604.0px;height:28.3px;background:#cce8ff;border-radius:2.5px;"></div><svg class="b" style="left:21px;top:371.4px" width="15" height="12" viewBox="0 0 15 12"><path d="M0.5 1.2 Q0.5 0.2 1.5 0.2 H5.2 L6.4 1.9 H13.6 Q14.8 1.9 14.8 3.1 V3.6 H0.5Z" fill="#f5b016"/><rect x="0.2" y="3.4" width="14.6" height="8.4" rx="0.9" fill="url(#fg)"/><rect x="0.2" y="11.0" width="14.6" height="0.8" fill="#e6ad2e"/></svg><div class="t" style="left:40.69999999999999px;top:371px;font-size:12.8px;line-height:15px;color:#262626;transform:scaleX(0.8962);">chrome_url_fetcher_3348_762603971</div><div class="t" style="left:283px;top:372px;font-size:12.3px;line-height:14px;color:#6e6e6e;transform:scaleX(0.9516);">10/6/2023 08:59 PM</div><div class="t" style="left:428.5px;top:372px;font-size:12.3px;line-height:14px;color:#6e6e6e;transform:scaleX(0.9870);">File folder</div><div class="b" style="left:16.19999999999999px;top:396.94px;width:604.0px;height:28.3px;background:#cce8ff;border-radius:2.5px;"></div><svg class="b" style="left:21px;top:404.54px" width="15" height="12" viewBox="0 0 15 12"><path d="M0.5 1.2 Q0.5 0.2 1.5 0.2 H5.2 L6.4 1.9 H13.6 Q14.8 1.9 14.8 3.1 V3.6 H0.5Z" fill="#f5b016"/><rect x="0.2" y="3.4" width="14.6" height="8.4" rx="0.9" fill="url(#fg)"/><rect x="0.2" y="11.0" width="14.6" height="0.8" fill="#e6ad2e"/></svg><div class="t" style="left:40.69999999999999px;top:404px;font-size:12.8px;line-height:15px;color:#262626;transform:scaleX(0.8962);">chrome_url_fetcher_3348_791636275</div><div class="t" style="left:283px;top:405px;font-size:12.3px;line-height:14px;color:#6e6e6e;transform:scaleX(0.9516);">10/6/2023 08:58 PM</div><div class="t" style="left:428.5px;top:405px;font-size:12.3px;line-height:14px;color:#6e6e6e;transform:scaleX(0.9870);">File folder</div><div class="b" style="left:16.19999999999999px;top:430.08px;width:604.0px;height:28.3px;background:#cce8ff;border-radius:2.5px;"></div><svg class="b" style="left:21px;top:437.68px" width="15" height="12" viewBox="0 0 15 12"><path d="M0.5 1.2 Q0.5 0.2 1.5 0.2 H5.2 L6.4 1.9 H13.6 Q14.8 1.9 14.8 3.1 V3.6 H0.5Z" fill="#f5b016"/><rect x="0.2" y="3.4" width="14.6" height="8.4" rx="0.9" fill="url(#fg)"/><rect x="0.2" y="11.0" width="14.6" height="0.8" fill="#e6ad2e"/></svg><div class="t" style="left:40.69999999999999px;top:438px;font-size:12.8px;line-height:15px;color:#262626;transform:scaleX(0.8973);">chrome_url_fetcher_3348_1390261003</div><div class="t" style="left:283px;top:439px;font-size:12.3px;line-height:14px;color:#6e6e6e;transform:scaleX(0.9516);">10/6/2023 08:58 PM</div><div class="t" style="left:428.5px;top:439px;font-size:12.3px;line-height:14px;color:#6e6e6e;transform:scaleX(0.9870);">File folder</div><div class="b" style="left:16.19999999999999px;top:463.22px;width:604.0px;height:28.3px;background:#cce8ff;border-radius:2.5px;"></div><svg class="b" style="left:21px;top:470.82px" width="15" height="12" viewBox="0 0 15 12"><path d="M0.5 1.2 Q0.5 0.2 1.5 0.2 H5.2 L6.4 1.9 H13.6 Q14.8 1.9 14.8 3.1 V3.6 H0.5Z" fill="#f5b016"/><rect x="0.2" y="3.4" width="14.6" height="8.4" rx="0.9" fill="url(#fg)"/><rect x="0.2" y="11.0" width="14.6" height="0.8" fill="#e6ad2e"/></svg><div class="t" style="left:40.69999999999999px;top:471px;font-size:12.8px;line-height:15px;color:#262626;transform:scaleX(0.8962);">chrome_url_fetcher_3384_133701332</div><div class="t" style="left:283px;top:472px;font-size:12.3px;line-height:14px;color:#6e6e6e;transform:scaleX(0.9516);">10/5/2023 09:21 PM</div><div class="t" style="left:428.5px;top:472px;font-size:12.3px;line-height:14px;color:#6e6e6e;transform:scaleX(0.9870);">File folder</div><div class="b" style="left:16.19999999999999px;top:496.36px;width:604.0px;height:28.3px;background:#cce8ff;border-radius:2.5px;"></div><svg class="b" style="left:21px;top:503.96px" width="15" height="12" viewBox="0 0 15 12"><path d="M0.5 1.2 Q0.5 0.2 1.5 0.2 H5.2 L6.4 1.9 H13.6 Q14.8 1.9 14.8 3.1 V3.6 H0.5Z" fill="#f5b016"/><rect x="0.2" y="3.4" width="14.6" height="8.4" rx="0.9" fill="url(#fg)"/><rect x="0.2" y="11.0" width="14.6" height="0.8" fill="#e6ad2e"/></svg><div class="t" style="left:40.69999999999999px;top:504px;font-size:12.8px;line-height:15px;color:#262626;transform:scaleX(0.8962);">chrome_url_fetcher_3384_172591398</div><div class="t" style="left:283px;top:505px;font-size:12.3px;line-height:14px;color:#6e6e6e;transform:scaleX(0.9516);">10/5/2023 09:21 PM</div><div class="t" style="left:428.5px;top:505px;font-size:12.3px;line-height:14px;color:#6e6e6e;transform:scaleX(0.9870);">File folder</div><div class="b" style="left:16.19999999999999px;top:529.5px;width:604.0px;height:28.3px;background:#cce8ff;border-radius:2.5px;"></div><svg class="b" style="left:21px;top:537.1px" width="15" height="12" viewBox="0 0 15 12"><path d="M0.5 1.2 Q0.5 0.2 1.5 0.2 H5.2 L6.4 1.9 H13.6 Q14.8 1.9 14.8 3.1 V3.6 H0.5Z" fill="#f5b016"/><rect x="0.2" y="3.4" width="14.6" height="8.4" rx="0.9" fill="url(#fg)"/><rect x="0.2" y="11.0" width="14.6" height="0.8" fill="#e6ad2e"/></svg><div class="t" style="left:40.69999999999999px;top:537px;font-size:12.8px;line-height:15px;color:#262626;transform:scaleX(0.8962);">chrome_url_fetcher_3384_754151892</div><div class="t" style="left:283px;top:538px;font-size:12.3px;line-height:14px;color:#6e6e6e;transform:scaleX(0.9516);">10/5/2023 09:21 PM</div><div class="t" style="left:428.5px;top:538px;font-size:12.3px;line-height:14px;color:#6e6e6e;transform:scaleX(0.9870);">File folder</div><div class="b" style="left:16.19999999999999px;top:562.64px;width:604.0px;height:28.3px;background:#cce8ff;border-radius:2.5px;"></div><svg class="b" style="left:21px;top:570.24px" width="15" height="12" viewBox="0 0 15 12"><path d="M0.5 1.2 Q0.5 0.2 1.5 0.2 H5.2 L6.4 1.9 H13.6 Q14.8 1.9 14.8 3.1 V3.6 H0.5Z" fill="#f5b016"/><rect x="0.2" y="3.4" width="14.6" height="8.4" rx="0.9" fill="url(#fg)"/><rect x="0.2" y="11.0" width="14.6" height="0.8" fill="#e6ad2e"/></svg><div class="t" style="left:40.69999999999999px;top:570px;font-size:12.8px;line-height:15px;color:#262626;transform:scaleX(0.9042);">chrome_url_fetcher_3384_799376111</div><div class="t" style="left:283px;top:571px;font-size:12.3px;line-height:14px;color:#6e6e6e;transform:scaleX(0.9516);">10/5/2023 09:21 PM</div><div class="t" style="left:428.5px;top:571px;font-size:12.3px;line-height:14px;color:#6e6e6e;transform:scaleX(0.9870);">File folder</div><div class="b" style="left:16.19999999999999px;top:595.78px;width:604.0px;height:28.3px;background:#cce8ff;border-radius:2.5px;"></div><svg class="b" style="left:21px;top:603.38px" width="15" height="12" viewBox="0 0 15 12"><path d="M0.5 1.2 Q0.5 0.2 1.5 0.2 H5.2 L6.4 1.9 H13.6 Q14.8 1.9 14.8 3.1 V3.6 H0.5Z" fill="#f5b016"/><rect x="0.2" y="3.4" width="14.6" height="8.4" rx="0.9" fill="url(#fg)"/><rect x="0.2" y="11.0" width="14.6" height="0.8" fill="#e6ad2e"/></svg><div class="t" style="left:40.69999999999999px;top:603px;font-size:12.8px;line-height:15px;color:#262626;transform:scaleX(0.8952);">chrome_url_fetcher_5068_12030369</div><div class="t" style="left:283px;top:604px;font-size:12.3px;line-height:14px;color:#6e6e6e;transform:scaleX(0.9516);">9/28/2023 12:16 PM</div><div class="t" style="left:428.5px;top:604px;font-size:12.3px;line-height:14px;color:#6e6e6e;transform:scaleX(0.9870);">File folder</div><div class="b" style="left:16.19999999999999px;top:628.92px;width:604.0px;height:28.3px;background:#cce8ff;border-radius:2.5px;"></div><svg class="b" style="left:21px;top:636.52px" width="15" height="12" viewBox="0 0 15 12"><path d="M0.5 1.2 Q0.5 0.2 1.5 0.2 H5.2 L6.4 1.9 H13.6 Q14.8 1.9 14.8 3.1 V3.6 H0.5Z" fill="#f5b016"/><rect x="0.2" y="3.4" width="14.6" height="8.4" rx="0.9" fill="url(#fg)"/><rect x="0.2" y="11.0" width="14.6" height="0.8" fill="#e6ad2e"/></svg><div class="t" style="left:40.69999999999999px;top:636px;font-size:12.8px;line-height:15px;color:#262626;transform:scaleX(0.8962);">chrome_url_fetcher_5068_764171856</div><div class="t" style="left:283px;top:637px;font-size:12.3px;line-height:14px;color:#6e6e6e;transform:scaleX(0.9516);">9/28/2023 12:16 PM</div><div class="t" style="left:428.5px;top:637px;font-size:12.3px;line-height:14px;color:#6e6e6e;transform:scaleX(0.9870);">File folder</div><div class="b" style="left:16.19999999999999px;top:662.06px;width:604.0px;height:28.3px;background:#cce8ff;border-radius:2.5px;"></div><svg class="b" style="left:21px;top:669.66px" width="15" height="12" viewBox="0 0 15 12"><path d="M0.5 1.2 Q0.5 0.2 1.5 0.2 H5.2 L6.4 1.9 H13.6 Q14.8 1.9 14.8 3.1 V3.6 H0.5Z" fill="#f5b016"/><rect x="0.2" y="3.4" width="14.6" height="8.4" rx="0.9" fill="url(#fg)"/><rect x="0.2" y="11.0" width="14.6" height="0.8" fill="#e6ad2e"/></svg><div class="t" style="left:40.69999999999999px;top:669px;font-size:12.8px;line-height:15px;color:#262626;transform:scaleX(0.8973);">chrome_url_fetcher_5068_1016669819</div><div class="t" style="left:283px;top:670px;font-size:12.3px;line-height:14px;color:#6e6e6e;transform:scaleX(0.9516);">9/28/2023 12:16 PM</div><div class="t" style="left:428.5px;top:670px;font-size:12.3px;line-height:14px;color:#6e6e6e;transform:scaleX(0.9870);">File folder</div><div class="b" style="left:16.19999999999999px;top:695.2px;width:604.0px;height:28.3px;background:#cce8ff;border-radius:2.5px;"></div><svg class="b" style="left:21px;top:702.8px" width="15" height="12" viewBox="0 0 15 12"><path d="M0.5 1.2 Q0.5 0.2 1.5 0.2 H5.2 L6.4 1.9 H13.6 Q14.8 1.9 14.8 3.1 V3.6 H0.5Z" fill="#f5b016"/><rect x="0.2" y="3.4" width="14.6" height="8.4" rx="0.9" fill="url(#fg)"/><rect x="0.2" y="11.0" width="14.6" height="0.8" fill="#e6ad2e"/></svg><div class="t" style="left:40.69999999999999px;top:703px;font-size:12.8px;line-height:15px;color:#262626;transform:scaleX(0.9026);">chrome_url_fetcher_5068_2011129</div><div class="t" style="left:283px;top:704px;font-size:12.3px;line-height:14px;color:#6e6e6e;transform:scaleX(0.9516);">9/28/2023 12:16 PM</div><div class="t" style="left:428.5px;top:704px;font-size:12.3px;line-height:14px;color:#6e6e6e;transform:scaleX(0.9870);">File folder</div></div><div class="b" style="left:1241px;top:143px;width:16px;height:698px;background:#eeeeee;"></div><div class="b" style="left:1247.2px;top:159.7px;width:2.8px;height:30px;background:#8a8a8a;border-radius:2px;"></div><div class="b" style="left:1257px;top:143px;width:279px;height:698px;background:#ffffff;"></div><div class="b" style="left:1257px;top:143px;width:1px;height:698px;background:#f7f7f7;"></div><div class="t" style="left:1340.8px;top:485px;font-size:13px;line-height:15px;color:#707070;transform:scaleX(0.9314);">No preview available.</div><div class="b" style="left:0px;top:841px;width:1536px;height:21px;background:#ffffff;"></div><div class="t" style="left:13px;top:846px;font-size:12.4px;line-height:14px;color:#444a52;transform:scaleX(0.9584);">446 items</div><div class="b" style="left:74.5px;top:847px;width:1px;height:15px;background:#f0f0f0;"></div><div class="t" style="left:84.9px;top:846px;font-size:12.4px;line-height:14px;color:#444a52;transform:scaleX(0.9554);">446 items selected</div><div class="b" style="left:194px;top:847px;width:1px;height:15px;background:#f0f0f0;"></div><div class="b" style="left:1487.5px;top:841px;width:22.3px;height:21px;background:#cce4f7;box-shadow:inset 0 0 0 1px #7ab8ea;"></div><svg class="b" style="left:1493px;top:847px" width="13" height="12" viewBox="0 0 13 12"><path d="M0.5 1.5 H12.5 M0.5 4.5 H12.5 M0.5 7.5 H12.5 M0.5 10.5 H12.5" stroke="#333" stroke-width="1.1"/></svg><div class="b" style="left:1512px;top:843px;width:18px;height:19px;background:#f6f6f6;"></div><svg class="b" style="left:1515px;top:846px" width="13" height="12" viewBox="0 0 13 12"><rect x="0.6" y="0.6" width="11.6" height="9.2" stroke="#333" stroke-width="1.1" fill="none"/><path d="M0.6 11.4 H12.2" stroke="#333" stroke-width="1.1"/></svg>
</body></html>
